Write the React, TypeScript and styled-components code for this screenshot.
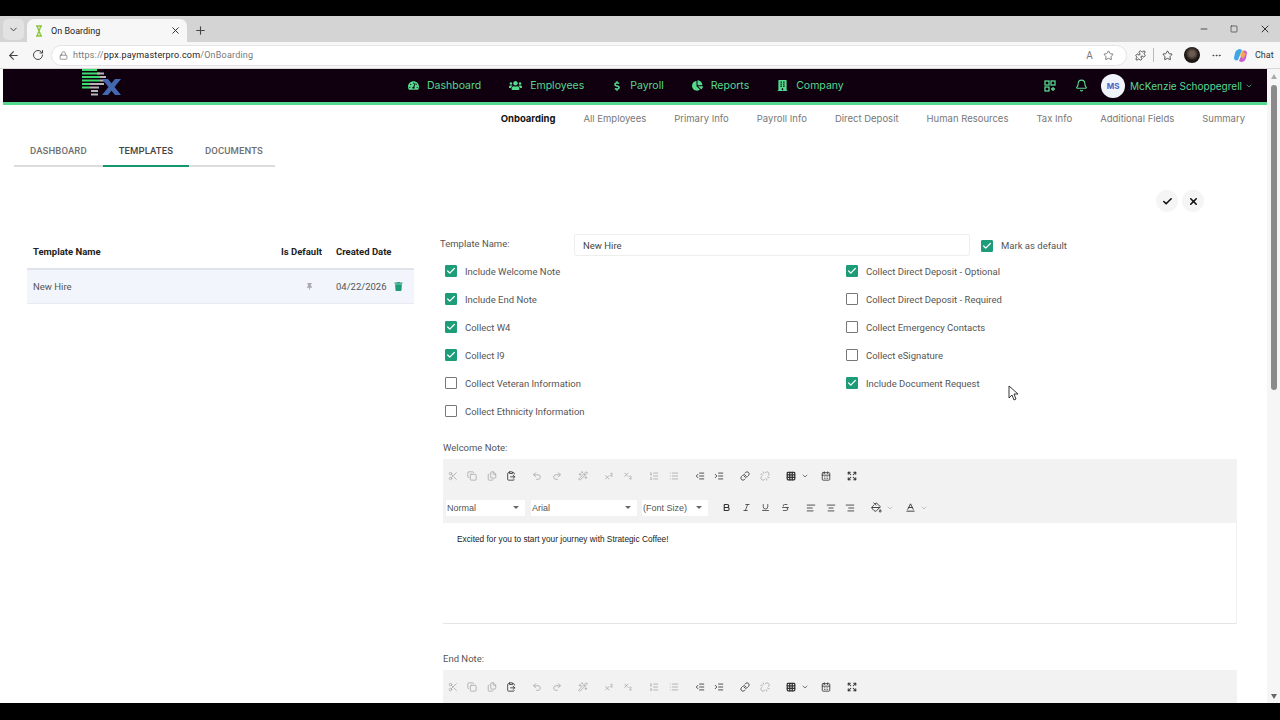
import React from "react";
import styled, { createGlobalStyle } from "styled-components";
import {
  ArrowLeft,
  AlignCenter,
  AlignLeft,
  AlignRight,
  Bell,
  Bold,
  Check,
  ChevronDown,
  ClipboardPaste,
  Copy,
  Expand,
  Grid3x3,
  IndentDecrease,
  IndentIncrease,
  Italic,
  Link,
  List,
  ListOrdered,
  Lock,
  Minus,
  MoreHorizontal,
  PaintBucket,
  Plus,
  Puzzle,
  Redo2,
  RotateCw,
  Scissors,
  Square,
  Star,
  Strikethrough,
  Subscript,
  Superscript,
  Underline,
  Undo2,
  Unlink,
  Wand2,
  X,
  FileText,
  Files,
  ListChecks,
  CalendarDays,
  Baseline,
} from "lucide-react";
import { FaBuilding, FaChartPie, FaDollarSign, FaTachometerAlt, FaTrash, FaUsers, FaThumbtack } from "react-icons/fa";

const GlobalStyle = createGlobalStyle`
  html, body {
    margin: 0;
    padding: 0;
    height: 100%;
    overflow: hidden;
    background: #000;
  }
  * {
    box-sizing: border-box;
  }
`;

const Frame = styled.div`
  width: 1280px;
  height: 720px;
  display: flex;
  flex-direction: column;
  background: #000;
  padding: 16px 0 17px;
  font-family: Roboto, "Liberation Sans", sans-serif;
  overflow: hidden;
  position: relative;
`;

const TabStrip = styled.div`
  height: 26px;
  flex: none;
  background: #d4d4d4;
  display: flex;
  align-items: flex-end;
  padding-left: 3px;
`;

const TabMenu = styled.div`
  width: 21px;
  height: 21px;
  margin-bottom: 2px;
  border-radius: 5px;
  background: #e2e2e2;
  display: flex;
  align-items: center;
  justify-content: center;
  color: #333;
`;

const BrowserTab = styled.div`
  width: 160px;
  height: 23px;
  margin-left: 3px;
  background: #f7f7f7;
  border-radius: 7px 7px 0 0;
  display: flex;
  align-items: center;
  padding: 0 6px 0 7px;
  font-size: 9px;
  color: #222;
`;

const TabTitle = styled.span`
  flex: 1;
  margin-left: 7px;
`;

const NewTab = styled.div`
  width: 26px;
  height: 23px;
  display: flex;
  align-items: center;
  justify-content: center;
  color: #444;
`;

const WindowControls = styled.div`
  margin-left: auto;
  height: 26px;
  display: flex;
  align-items: center;
  color: #333;
`;

const WindowButton = styled.div`
  width: 30.5px;
  display: flex;
  justify-content: center;
`;

const AddressBar = styled.div`
  height: 27px;
  flex: none;
  background: #f7f7f7;
  border-bottom: 1px solid #d8d8d8;
  display: flex;
  align-items: center;
  color: #444;
`;

const NavIcon = styled.div<{ $w: number }>`
  width: ${(p) => p.$w}px;
  flex: none;
  display: flex;
  justify-content: center;
  align-items: center;
`;

const UrlPill = styled.div`
  width: 1076px;
  height: 21px;
  margin-left: 1px;
  background: #fff;
  border: 1px solid #e4e4e4;
  border-radius: 11px;
  display: flex;
  align-items: center;
  padding: 0 8px 0 3px;
  font-size: 9px;
  color: #777;
`;

const UrlText = styled.div`
  flex: 1;
  margin-left: 2px;
  letter-spacing: 0.2px;
  b {
    font-weight: 400;
    color: #222;
  }
`;

const Divider = styled.div`
  width: 1px;
  height: 14px;
  background: #bbb;
`;

const FaceDot = styled.div`
  width: 16px;
  height: 16px;
  border-radius: 50%;
  background: radial-gradient(circle at 50% 42%, #6a5a50 0 22%, #1b1614 55%);
`;

const ChatLabel = styled.span`
  font-size: 9px;
  color: #333;
  margin-left: 4px;
`;

const Viewport = styled.div`
  flex: 1;
  min-height: 0;
  display: flex;
  background: #fff;
  padding-left: 3px;
`;

const Page = styled.div`
  flex: 1;
  min-width: 0;
  overflow: hidden;
`;

const TopNav = styled.header`
  height: 36px;
  background: #10000f;
  border-bottom: 3px solid #55d98f;
  display: flex;
  align-items: center;
  color: #55d98f;
  font-family: Inter, "Liberation Sans", sans-serif;
  font-size: 10.5px;
  position: relative;
`;

const Logo = styled.svg`
  margin-left: 79px;
  align-self: flex-start;
  flex: none;
`;

const MainMenu = styled.nav`
  display: flex;
  margin-left: 286px;
  gap: 28px;
`;

const MenuItem = styled.div`
  display: flex;
  align-items: center;
  gap: 8px;
  white-space: nowrap;
`;

const UserArea = styled.div`
  margin-left: auto;
  padding-right: 14px;
  display: flex;
  align-items: center;
  font-size: 10px;
`;

const Avatar = styled.div`
  width: 24px;
  height: 24px;
  border-radius: 50%;
  background: #f1f3fb;
  color: #4c63c4;
  font-weight: 700;
  font-size: 8px;
  display: flex;
  align-items: center;
  justify-content: center;
  margin: 0 5px 0 13px;
`;

const SubNav = styled.nav`
  height: 30px;
  display: flex;
  justify-content: flex-end;
  align-items: center;
  gap: 28px;
  padding-right: 22px;
  padding-bottom: 4px;
  font-family: Inter, "Liberation Sans", sans-serif;
  font-size: 9.5px;
  color: #777;
`;

const SubNavItem = styled.span<{ $active?: boolean }>`
  color: ${(p) => (p.$active ? "#111" : "#777")};
  font-weight: ${(p) => (p.$active ? 700 : 400)};
  white-space: nowrap;
`;

const Panel = styled.div`
  padding: 0 32px 0 24px;
  margin-left: -13px;
`;

const TabBar = styled.div`
  display: flex;
  width: 261px;
  margin-left: 0;
  border-bottom: 2px solid #dcdcdc;
  height: 32px;
`;

const PanelTab = styled.div<{ $active?: boolean }>`
  padding: 0 16px;
  height: 32px;
  display: flex;
  align-items: center;
  font-size: 9.5px;
  font-weight: 500;
  letter-spacing: 0.1px;
  color: ${(p) => (p.$active ? "#444" : "#6f6f6f")};
  border-bottom: 2px solid ${(p) => (p.$active ? "#16966f" : "transparent")};
`;

const PanelWrap = styled.div`
  padding-left: 11px;
`;

const Actions = styled.div`
  display: flex;
  justify-content: flex-end;
  gap: 4px;
  height: 24px;
  margin: 23px 31px 0 0;
`;

const RoundButton = styled.div`
  width: 22px;
  height: 22px;
  border-radius: 50%;
  background: #f5f5f5;
  color: #111;
  display: flex;
  align-items: center;
  justify-content: center;
`;

const Columns = styled.div`
  display: flex;
  margin-top: 20px;
`;

const TemplateTable = styled.div`
  width: 387px;
  margin-left: 13px;
  flex: none;
  font-size: 9.5px;
`;

const TableHead = styled.div`
  height: 36px;
  display: grid;
  grid-template-columns: 248px 55px 1fr;
  align-items: center;
  padding-left: 6px;
  font-weight: 700;
  color: #222;
  border-bottom: 2px solid #dfe3ea;
`;

const TableRow = styled.div`
  height: 34px;
  background: #f2f5fb;
  border-bottom: 1px solid #e8ebf1;
  display: grid;
  grid-template-columns: 248px 55px 1fr 20px;
  align-items: center;
  padding-left: 6px;
  color: #555;
`;

const PinCell = styled.div`
  color: #aaa;
  display: flex;
  justify-content: center;
  padding-left: 2px;
`;

const TrashCell = styled.div`
  color: #1e9c7a;
  display: flex;
`;

const Form = styled.div`
  flex: 1;
  margin-left: 26px;
  font-size: 9.5px;
  color: #555;
`;

const NameRow = styled.div`
  display: flex;
  height: 22px;
  margin-top: 0;
  align-items: center;
`;

const NameLabel = styled.label`
  width: 134px;
  flex: none;
  margin-top: -3px;
  font-size: 9.5px;
`;

const NameInput = styled.div`
  width: 396px;
  height: 22px;
  border: 1px solid #eeeeee;
  border-radius: 2px;
  display: flex;
  align-items: center;
  padding-left: 8px;
  color: #444;
`;

const DefaultOption = styled.div`
  display: flex;
  align-items: center;
  gap: 8px;
  margin-left: 11px;
  padding-top: 1px;
`;

const CheckGrid = styled.div`
  display: grid;
  grid-template-columns: 401px 1fr;
  grid-auto-rows: 28px;
  margin: 1px 0 0 5px;
`;

const CheckItem = styled.div`
  display: flex;
  align-items: center;
  gap: 8px;
`;

const Box = styled.span<{ $on?: boolean }>`
  width: 12px;
  height: 12px;
  flex: none;
  border-radius: 1px;
  display: flex;
  align-items: center;
  justify-content: center;
  color: #fff;
  background: ${(p) => (p.$on ? "#1c9c78" : "#fff")};
  border: 1px solid ${(p) => (p.$on ? "#1c9c78" : "#777")};
`;

const FieldLabel = styled.div<{ $top: number }>`
  margin: ${(p) => p.$top}px 0 0 3px;
  height: 13px;
  line-height: 13px;
`;

const Editor = styled.div`
  width: 794px;
  margin: 5px 0 0 3px;
`;

const ToolRow = styled.div<{ $h: number }>`
  height: ${(p) => p.$h}px;
  background: #f2f2f2;
  display: flex;
  align-items: center;
  color: #aaa;
`;

const ToolGroup = styled.div`
  display: flex;
  align-items: center;
  margin-right: 6.5px;
`;

const Tool = styled.div<{ $dark?: boolean; $w?: number }>`
  width: ${(p) => p.$w ?? 19.5}px;
  display: flex;
  justify-content: center;
  color: ${(p) => (p.$dark ? "#333" : "#aaa")};
`;

const Select = styled.div<{ $w: number; $gap?: number }>`
  width: ${(p) => p.$w}px;
  height: 16px;
  margin-left: ${(p) => p.$gap ?? 0}px;
  background: #fff;
  display: flex;
  align-items: center;
  justify-content: space-between;
  padding: 0 6px 0 1px;
  color: #555;
  font-size: 9px;
  font-family: "Liberation Sans", Arial, sans-serif;
  &::after {
    content: "";
    border-left: 3px solid transparent;
    border-right: 3px solid transparent;
    border-top: 3px solid #666;
  }
`;

const EditorBody = styled.div`
  height: 101px;
  background: #fff;
  border-bottom: 1px solid #e4e4e4;
  border-right: 1px solid #f0f0f0;
  padding: 11px 14px;
  font-family: "Liberation Sans", Arial, sans-serif;
  font-size: 8.3px;
  color: #222;
`;

const Scrollbar = styled.div`
  width: 13px;
  flex: none;
  background: #f6f6f6;
  display: flex;
  flex-direction: column;
  align-items: center;
`;

const ScrollArrow = styled.div<{ $down?: boolean }>`
  width: 0;
  height: 0;
  border-left: 3.5px solid transparent;
  border-right: 3.5px solid transparent;
  ${(p) => (p.$down ? "border-top: 5px solid #666;" : "border-bottom: 5px solid #aaa;")}
  margin: ${(p) => (p.$down ? "auto 0 4px" : "5px 0 6px")};
`;

const ScrollThumb = styled.div`
  width: 6px;
  height: 305px;
  border-radius: 3px;
  background: #8b8b8b;
`;

const Pointer = styled.svg`
  position: absolute;
  left: 1008px;
  top: 385px;
`;

const checks: [string, boolean, string, boolean][] = [
  ["Include Welcome Note", true, "Collect Direct Deposit - Optional", true],
  ["Include End Note", true, "Collect Direct Deposit - Required", false],
  ["Collect W4", true, "Collect Emergency Contacts", false],
  ["Collect I9", true, "Collect eSignature", false],
  ["Collect Veteran Information", false, "Include Document Request", true],
  ["Collect Ethnicity Information", false, "", false],
];

const subNav = [
  "Onboarding",
  "All Employees",
  "Primary Info",
  "Payroll Info",
  "Direct Deposit",
  "Human Resources",
  "Tax Info",
  "Additional Fields",
  "Summary",
];

const Checkbox: React.FC<{ on: boolean }> = ({ on }) => (
  <Box $on={on}>{on && <Check size={10} strokeWidth={3} />}</Box>
);

const PpxLogo = () => (
  <svg width="0" height="0" />
);

const TopToolbar = () => (
  <ToolRow $h={33}>
    <ToolGroup>
      <Tool><Scissors size={10} /></Tool>
      <Tool><Copy size={10} /></Tool>
      <Tool><Files size={10} /></Tool>
      <Tool $dark><ClipboardPaste size={10} /></Tool>
    </ToolGroup>
    <ToolGroup>
      <Tool><Undo2 size={10} /></Tool>
      <Tool><Redo2 size={10} /></Tool>
    </ToolGroup>
    <ToolGroup>
      <Tool><Wand2 size={10} /></Tool>
    </ToolGroup>
    <ToolGroup>
      <Tool><Superscript size={10} /></Tool>
      <Tool><Subscript size={10} /></Tool>
    </ToolGroup>
    <ToolGroup>
      <Tool><ListOrdered size={10} /></Tool>
      <Tool><List size={10} /></Tool>
    </ToolGroup>
    <ToolGroup>
      <Tool $dark><IndentDecrease size={10} /></Tool>
      <Tool $dark><IndentIncrease size={10} /></Tool>
    </ToolGroup>
    <ToolGroup>
      <Tool $dark><Link size={10} /></Tool>
      <Tool><Unlink size={10} /></Tool>
    </ToolGroup>
    <ToolGroup>
      <Tool $dark><Grid3x3 size={10} strokeWidth={3} /></Tool>
      <Tool $dark $w={9}><ChevronDown size={8} /></Tool>
    </ToolGroup>
    <ToolGroup>
      <Tool $dark><CalendarDays size={10} /></Tool>
    </ToolGroup>
    <ToolGroup>
      <Tool $dark><Expand size={10} strokeWidth={2.5} /></Tool>
    </ToolGroup>
  </ToolRow>
);

export default function App() {
  return (
    <Frame>
      <GlobalStyle />
      <TabStrip>
        <TabMenu><ChevronDown size={11} /></TabMenu>
        <BrowserTab>
          <ListChecks size={0} />
          <svg width="10" height="12" viewBox="0 0 10 12">
            <path d="M2 1h6M2 11h6M3 1l2 5-2 5M7 1L5 6l2 5" stroke="#8cc63f" strokeWidth="1.4" fill="none" />
          </svg>
          <TabTitle>On Boarding</TabTitle>
          <X size={11} />
        </BrowserTab>
        <NewTab><Plus size={13} /></NewTab>
        <WindowControls>
          <WindowButton><Minus size={10} /></WindowButton>
          <WindowButton><Square size={8} /></WindowButton>
          <WindowButton><X size={12} /></WindowButton>
        </WindowControls>
      </TabStrip>
      <AddressBar>
        <NavIcon $w={26}><ArrowLeft size={13} /></NavIcon>
        <NavIcon $w={24}><RotateCw size={12} /></NavIcon>
        <UrlPill>
          <NavIcon $w={16}><Lock size={9} /></NavIcon>
          <UrlText>https://<b>ppx.paymasterpro.com</b>/OnBoarding</UrlText>
          <NavIcon $w={19}><FileText size={0} /><span style={{ fontSize: 10 }}>A</span></NavIcon>
          <NavIcon $w={19}><Star size={11} /></NavIcon>
        </UrlPill>
        <NavIcon $w={26}><Puzzle size={11} /></NavIcon>
        <Divider />
        <NavIcon $w={27}><Star size={11} /></NavIcon>
        <NavIcon $w={22}><FaceDot /></NavIcon>
        <NavIcon $w={26}><MoreHorizontal size={11} /></NavIcon>
        <NavIcon $w={22}>
          <svg width="15" height="15" viewBox="0 0 15 15">
            <path d="M2 5c1-3 3-4 5-4l2 1-4 10c-2 1-4 0-4-2z" fill="#3fa7e8" />
            <path d="M13 10c-1 3-3 4-5 4l-2-1 4-10c2-1 4 0 4 2z" fill="#c95cd6" />
            <path d="M9 2l-2 5 3 4 3-5z" fill="#f7b23b" opacity="0.85" />
          </svg>
        </NavIcon>
        <ChatLabel>Chat</ChatLabel>
      </AddressBar>
      <Viewport>
        <Page>
          <TopNav>
            <Logo width="40" height="27" viewBox="0 0 40 27">
              <g fill="#3ddc6e">
                <rect x="0" y="0" width="15" height="2" />
                <rect x="0" y="3.5" width="18" height="2" />
                <rect x="0" y="7" width="19" height="2" />
                <rect x="0" y="10.5" width="18" height="2" />
                <rect x="0" y="14" width="15" height="2" />
                <rect x="0" y="17.5" width="8" height="2" />
              </g>
              <g fill="#b9b4b8">
                <rect x="15" y="3.5" width="7" height="2" />
                <rect x="18" y="7" width="6" height="2" />
                <rect x="18" y="10.5" width="6" height="2" />
                <rect x="8" y="14" width="14" height="2" />
                <rect x="8" y="17.5" width="9" height="2" />
                <rect x="9" y="21" width="7" height="2" />
                <rect x="9" y="24.5" width="7" height="2" />
              </g>
              <g fill="#4468b0">
                <polygon points="20,10 26,10 39,26 33,26" />
                <polygon points="33,10 39,10 26,26 20,26" />
              </g>
            </Logo>
            <MainMenu>
              <MenuItem><FaTachometerAlt size={11} />Dashboard</MenuItem>
              <MenuItem><FaUsers size={13} />Employees</MenuItem>
              <MenuItem><FaDollarSign size={10} />Payroll</MenuItem>
              <MenuItem><FaChartPie size={11} />Reports</MenuItem>
              <MenuItem><FaBuilding size={11} />Company</MenuItem>
            </MainMenu>
            <UserArea>
              <svg width="12" height="12" viewBox="0 0 12 12" fill="none" stroke="currentColor" strokeWidth="1.3">
                <rect x="1" y="1" width="4" height="4" />
                <rect x="7" y="1" width="4" height="4" />
                <rect x="1" y="7" width="4" height="4" />
                <path d="M9 7v4M7 9h4" />
              </svg>
              <Bell size={13} style={{ marginLeft: 19 }} />
              <Avatar>MS</Avatar>
              McKenzie Schoppegrell
              <ChevronDown size={8} style={{ marginLeft: 3 }} />
            </UserArea>
          </TopNav>
          <SubNav>
            {subNav.map((label, i) => (
              <SubNavItem key={label} $active={i === 0}>{label}</SubNavItem>
            ))}
          </SubNav>
          <Panel>
            <TabBar>
              <PanelTab>DASHBOARD</PanelTab>
              <PanelTab $active>TEMPLATES</PanelTab>
              <PanelTab>DOCUMENTS</PanelTab>
            </TabBar>
            <Actions>
              <RoundButton><Check size={11} strokeWidth={3.5} /></RoundButton>
              <RoundButton><X size={11} strokeWidth={3.5} /></RoundButton>
            </Actions>
            <Columns>
              <TemplateTable>
                <TableHead>
                  <span>Template Name</span>
                  <span>Is Default</span>
                  <span>Created Date</span>
                </TableHead>
                <TableRow>
                  <span>New Hire</span>
                  <PinCell><FaThumbtack size={7} /></PinCell>
                  <span>04/22/2026</span>
                  <TrashCell><FaTrash size={9} /></TrashCell>
                </TableRow>
              </TemplateTable>
              <Form>
                <NameRow>
                  <NameLabel>Template Name:</NameLabel>
                  <NameInput>New Hire</NameInput>
                  <DefaultOption>
                    <Checkbox on />
                    Mark as default
                  </DefaultOption>
                </NameRow>
                <CheckGrid>
                  {checks.map(([a, aOn, b, bOn]) => (
                    <React.Fragment key={a}>
                      <CheckItem>
                        <Checkbox on={aOn} />
                        {a}
                      </CheckItem>
                      <CheckItem>
                        {b && <Checkbox on={bOn} />}
                        {b}
                      </CheckItem>
                    </React.Fragment>
                  ))}
                </CheckGrid>
                <FieldLabel $top={16}>Welcome Note:</FieldLabel>
                <Editor>
                  <TopToolbar />
                  <ToolRow $h={31}>
                    <Select $w={79} $gap={3}>Normal</Select>
                    <Select $w={106} $gap={6}>Arial</Select>
                    <Select $w={66} $gap={5}>(Font Size)</Select>
                    <ToolGroup style={{ marginLeft: 9 }}>
                      <Tool $dark><Bold size={9} strokeWidth={3} /></Tool>
                      <Tool $dark><Italic size={9} /></Tool>
                      <Tool $dark><Underline size={9} /></Tool>
                      <Tool $dark><Strikethrough size={9} /></Tool>
                    </ToolGroup>
                    <ToolGroup>
                      <Tool $dark><AlignLeft size={10} /></Tool>
                      <Tool $dark><AlignCenter size={10} /></Tool>
                      <Tool $dark><AlignRight size={10} /></Tool>
                    </ToolGroup>
                    <ToolGroup>
                      <Tool $dark><PaintBucket size={11} /></Tool>
                      <Tool $w={8}><ChevronDown size={8} /></Tool>
                    </ToolGroup>
                    <ToolGroup>
                      <Tool $dark><Baseline size={11} /></Tool>
                      <Tool $w={8}><ChevronDown size={8} /></Tool>
                    </ToolGroup>
                  </ToolRow>
                  <EditorBody>Excited for you to start your journey with Strategic Coffee!</EditorBody>
                </Editor>
                <FieldLabel $top={28}>End Note:</FieldLabel>
                <Editor>
                  <TopToolbar />
                </Editor>
              </Form>
            </Columns>
          </Panel>
        </Page>
        <Scrollbar>
          <ScrollArrow />
          <ScrollThumb />
          <ScrollArrow $down />
        </Scrollbar>
      </Viewport>
      <Pointer width="11" height="16" viewBox="0 0 11 16">
        <path d="M1 1v12l3-3 2 5 2-1-2-5h4z" fill="#fff" stroke="#222" strokeWidth="0.9" />
      </Pointer>
    </Frame>
  );
}
